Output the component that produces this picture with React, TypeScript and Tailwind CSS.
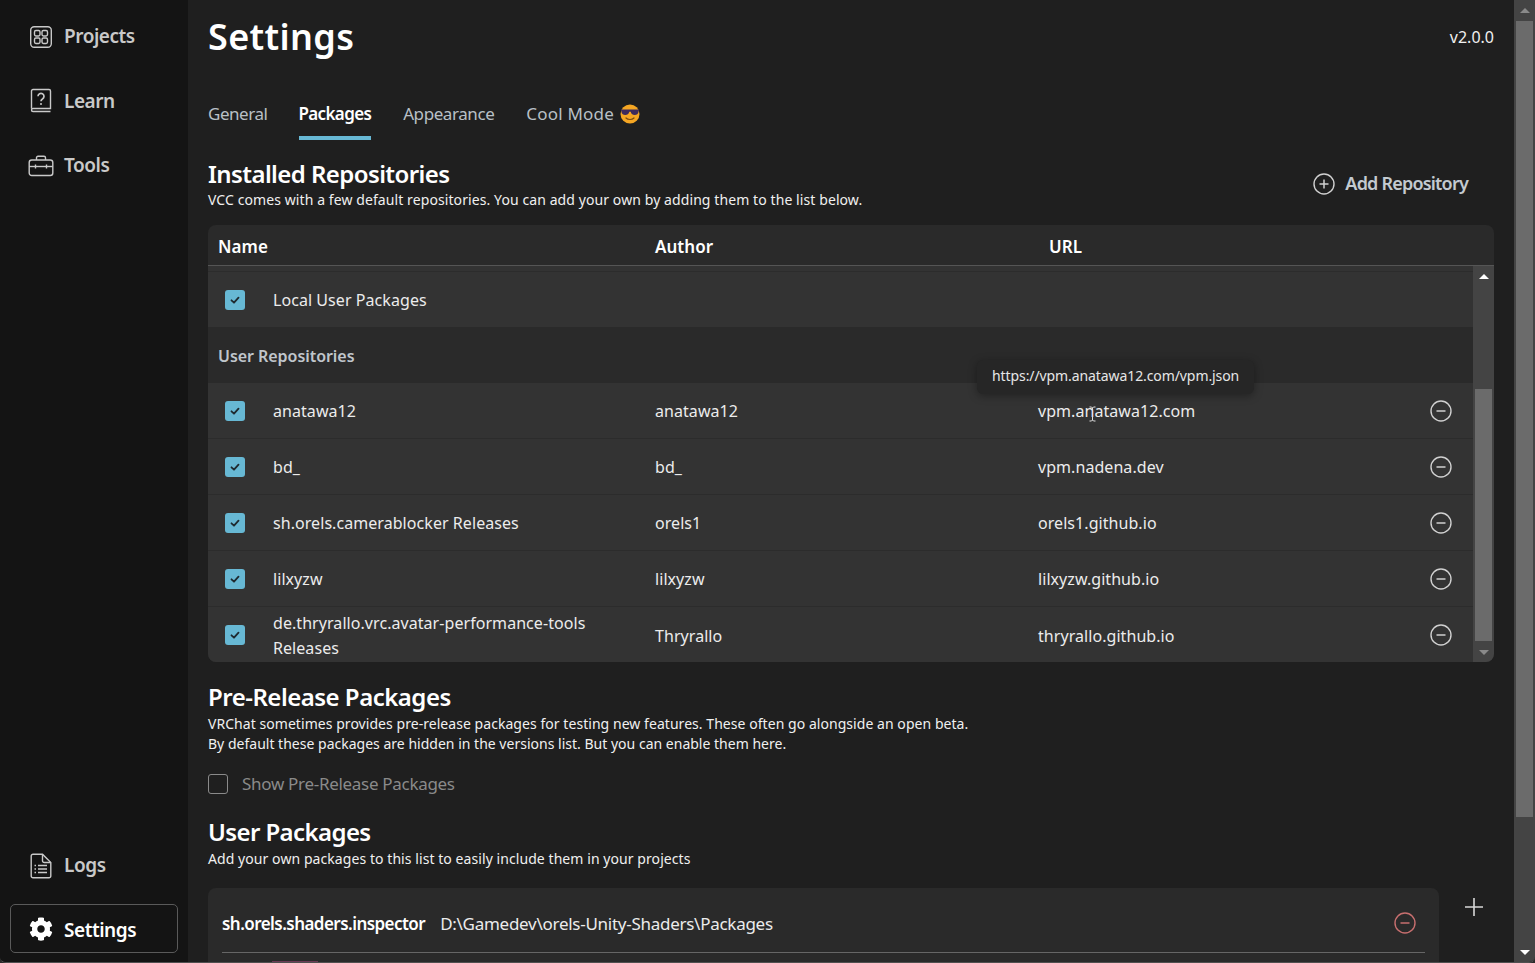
import type { ReactNode } from "react";
import { FaCog } from "react-icons/fa";

const repos = [
  { name: "anatawa12", author: "anatawa12", url: "vpm.anatawa12.com", tooltip: true },
  { name: "bd_", author: "bd_", url: "vpm.nadena.dev" },
  { name: "sh.orels.camerablocker Releases", author: "orels1", url: "orels1.github.io" },
  { name: "lilxyzw", author: "lilxyzw", url: "lilxyzw.github.io" },
  {
    name: "de.thryrallo.vrc.avatar-performance-tools Releases",
    author: "Thryrallo",
    url: "thryrallo.github.io",
  },
];

function ProjectsIcon() {
  return (
    <svg width="24" height="24" viewBox="0 0 24 24" fill="none" stroke="currentColor" strokeWidth="1.4">
      <rect x="1.7" y="1.7" width="20.6" height="20.6" rx="3.5" />
      <rect x="5.500" y="5.500" width="5.500" height="5.500" rx="1.4" />
      <rect x="13" y="5.500" width="5.500" height="5.500" rx="1.4" />
      <rect x="5.500" y="13" width="5.500" height="5.500" rx="1.4" />
      <rect x="13" y="13" width="5.500" height="5.500" rx="1.4" />
    </svg>
  );
}

function LearnIcon() {
  return (
    <svg width="24" height="26" viewBox="0 0 24 26" fill="none" stroke="currentColor" strokeWidth="1.4">
      <path d="M2.5 20.5V3a1.5 1.5 0 0 1 1.5-1.5h16A1.5 1.5 0 0 1 21.500 3v17.500H4a1.500 1.500 0 0 0-1.500 1.500v0A1.500 1.500 0 0 0 4 23.500h17.500" />
      <path d="M9 8.300a3 3 0 1 1 4.500 2.600c-1 .6-1.500 1.100-1.500 2.300" strokeWidth="1.700" />
      <circle cx="12" cy="16" r="1" fill="currentColor" stroke="none" />
    </svg>
  );
}

function ToolsIcon() {
  return (
    <svg width="26" height="22" viewBox="0 0 26 22" fill="none" stroke="currentColor" strokeWidth="1.4">
      <rect x="1.200" y="5" width="23.600" height="15.500" rx="2.500" />
      <path d="M8.500 5V2.800a1.500 1.500 0 0 1 1.500-1.500h6a1.500 1.500 0 0 1 1.500 1.500V5" />
      <path d="M1.200 11.500h23.600" />
      <path d="M7.500 9.500v4M18.500 9.500v4" />
    </svg>
  );
}

function LogsIcon() {
  return (
    <svg width="22" height="26" viewBox="0 0 22 26" fill="none" stroke="currentColor" strokeWidth="1.4">
      <path d="M3 1.200h9.500L20.800 9.500V23a1.800 1.800 0 0 1-1.800 1.800H3A1.800 1.800 0 0 1 1.200 23V3A1.800 1.800 0 0 1 3 1.200Z" />
      <path d="M12.500 1.200V7.700a1.800 1.800 0 0 0 1.800 1.800h6.500" />
      <path d="M8 12.500h9M8 16h9M8 19.500h9" />
      <path d="M4.500 12.500h1.500M4.500 16h1.500M4.500 19.500h1.500" />
    </svg>
  );
}

function CircleIcon({ plus, className }: { plus?: boolean; className: string }) {
  return (
    <svg className={className} width="22" height="22" viewBox="0 0 22 22" fill="none" stroke="currentColor" strokeWidth="1.400">
      <circle cx="11" cy="11" r="10" />
      <path d="M6.500 11h9" strokeWidth="1.500" />
      {plus ? <path d="M11 6.500v9" strokeWidth="1.500" /> : null}
    </svg>
  );
}

function CoolEmoji() {
  return (
    <svg width="20" height="20" viewBox="0 0 20 20">
      <circle cx="10" cy="10" r="9.500" fill="#f5a623" />
      <path d="M.8 5.500h18.400l-.5 1.500c-.3 3-2 4-4 4s-3.500-1.200-4-3.300h-1.400c-.5 2.100-2 3.300-4 3.300s-3.700-1-4-4Z" fill="#3d2a5c" />
      <path d="M6 14c2 2 6 2 8 0" fill="none" stroke="#7a4a10" strokeWidth="1.200" strokeLinecap="round" />
    </svg>
  );
}

function Checkbox() {
  return (
    <span className="flex h-5 w-5 items-center justify-center rounded-[3px] bg-[#67b8d4]">
      <svg width="12" height="12" viewBox="0 0 12 12" fill="none" stroke="#1f2a30" strokeWidth="1.800" strokeLinecap="round" strokeLinejoin="round">
        <path d="M2.500 6.300 5 8.700l4.500-5" />
      </svg>
    </span>
  );
}

function Scrollbar({
  top,
  thumb,
  bottom,
  upColor,
  downColor,
}: {
  top: string;
  thumb: string;
  bottom: string;
  upColor: string;
  downColor: string;
}) {
  return (
    <div className="flex w-[21px] shrink-0 flex-col bg-[#444444]">
      <div className={`flex items-start justify-center ${top}`}>
        <span className={`mt-[8px] h-0 w-0 border-x-[5px] border-b-[5px] border-x-transparent ${upColor}`} />
      </div>
      <div className={`mx-[2px] bg-[#6b6b6b] ${thumb}`} />
      <div className={`flex flex-col items-center justify-end ${bottom}`}>
        <span className={`mb-[7px] h-0 w-0 border-x-[5px] border-t-[5px] border-x-transparent ${downColor}`} />
      </div>
    </div>
  );
}

function NavItem({
  icon,
  label,
  active,
}: {
  icon: ReactNode;
  label: string;
  active?: boolean;
}) {
  return (
    <div
      className={`mx-[10px] flex h-[49px] items-center rounded-[5px] border text-[19px] font-semibold tracking-[-0.45px] ${
        active ? "border-[#5a5a5a] text-white" : "border-transparent text-[#c9c9c9]"
      }`}
    >
      <span className="flex w-[53px] shrink-0 justify-center pl-[7px]">{icon}</span>
      <span className={active ? "pt-[3px]" : ""}>{label}</span>
    </div>
  );
}

export default function App() {
  return (
    <div className="h-[963px] w-[1535px] bg-[#2b2b2b]">
      <div className="flex h-[963px] overflow-hidden rounded-b-md border-b border-[#505050] bg-[#1f1f1f] font-['Noto_Sans',sans-serif] text-white">
        <aside className="flex w-[188px] shrink-0 flex-col bg-[#141414] pb-[9px] pt-[12px]">
          <div className="flex flex-col gap-[15.5px]">
            <NavItem icon={<ProjectsIcon />} label="Projects" />
            <NavItem icon={<LearnIcon />} label="Learn" />
            <NavItem icon={<ToolsIcon />} label="Tools" />
          </div>
          <div className="mt-auto flex flex-col gap-[14px]">
            <NavItem icon={<LogsIcon />} label="Logs" />
            <NavItem icon={<FaCog size={24} />} label="Settings" active />
          </div>
        </aside>

        <main className="w-[1326px] shrink-0 overflow-hidden px-[20px]">
          <div className="flex h-[74px] items-center justify-between">
            <h1 className="text-[36px] font-semibold leading-none tracking-[0.35px]">Settings</h1>
            <span className="text-[16px] text-[#f0f0f0]">v2.0.0</span>
          </div>

          <nav className="mt-[14px] flex text-[17px] text-[#b9c0c6]">
            <span className="h-[52px] pt-[13px] tracking-[-0.45px]">General</span>
            <span className="ml-[31px] h-[52px] border-b-[4px] border-[#67b8d4] pt-[13px] font-semibold tracking-[-0.65px] text-white">Packages</span>
            <span className="ml-[32px] h-[52px] pt-[13px] tracking-[-0.42px]">Appearance</span>
            <span className="ml-[32px] flex h-[52px] items-start gap-[6px] pt-[13px] tracking-[0.2px]">
              Cool Mode
              <span className="mt-[3px]"><CoolEmoji /></span>
            </span>
          </nav>

          <div className="mt-[19px] flex items-start justify-between">
            <div>
              <h2 className="text-[24px] font-semibold leading-[30px] tracking-[-0.58px]">Installed Repositories</h2>
              <p className="mt-[1px] text-[14px] leading-[20px] tracking-[0.09px] text-[#f0f0f0]">
                VCC comes with a few default repositories. You can add your own by adding them to the list below.
              </p>
            </div>
            <button className="mr-[26px] mt-[11px] flex items-center gap-[10px] text-[18px] font-semibold tracking-[-0.8px] text-[#c3cad0]">
              <CircleIcon plus className="text-[#d0d0d0]" />
              Add Repository
            </button>
          </div>

          <section className="mt-[15px] overflow-hidden rounded-lg bg-[#2a2a2a]">
            <div className="grid h-[41px] grid-cols-[437px_394px_1fr] items-center border-b border-[#555555] pl-[10px] pt-[3px] text-[17px] font-semibold tracking-[0.05px]">
              <span>Name</span>
              <span>Author</span>
              <span>URL</span>
            </div>
            <div className="flex h-[396px]">
              <div className="min-w-0 flex-1 text-[16px] tracking-[0.06px] text-[#ececec]">
                <div className="h-[6px] border-b border-[#2c2c2c] bg-[#333333]" />
                <div className="flex h-[55px] items-center bg-[#333333] pl-[17px]">
                  <Checkbox />
                  <span className="ml-[28px]">Local User Packages</span>
                </div>
                <div className="flex h-[56px] items-center pl-[10px] pt-[2px] font-semibold tracking-[-0.05px] text-[#c0c6cc]">User Repositories</div>
                {repos.map((repo) => (
                  <div
                    key={repo.name}
                    className="relative grid h-[56px] grid-cols-[65px_382px_383px_1fr] items-center border-b border-[#2c2c2c] bg-[#333333] last:border-b-0"
                  >
                    <span className="pl-[17px]"><Checkbox /></span>
                    <span className="max-w-[330px] pt-[2px] leading-[25px]">{repo.name}</span>
                    <span className="pt-[1px]">{repo.author}</span>
                    <span className="pt-[1px]">{repo.url}</span>
                    <CircleIcon className="absolute left-[1222px] top-[17px] text-[#d0d0d0]" />
                    {repo.tooltip ? (
                      <>
                        <div className="absolute left-[769px] top-[-23px] rounded-md bg-[#262626] px-[15px] pb-[7px] pt-[5px] text-[14px] leading-[22px] tracking-[-0.09px] text-[#e6e6e6] shadow-[0_2px_8px_rgba(0,0,0,0.35)]">
                          https://vpm.anatawa12.com/vpm.json
                        </div>
                        <svg className="absolute left-[880px] top-[23px]" width="9" height="16" viewBox="0 0 9 16" fill="none" stroke="#e0e0e0" strokeWidth="1">
                          <path d="M1.500 1h2l1 1 1-1h2M4.500 2v12M1.500 15h2l1-1 1 1h2" />
                        </svg>
                      </>
                    ) : null}
                  </div>
                ))}
              </div>
              <Scrollbar
                top="h-[123px]"
                thumb="h-[252px]"
                bottom="h-[21px]"
                upColor="border-b-white"
                downColor="border-t-[#8a8a8a]"
              />
            </div>
          </section>

          <h2 className="mt-[20px] text-[24px] font-semibold leading-[30px] tracking-[-0.5px]">Pre-Release Packages</h2>
          <p className="mt-[2px] text-[14px] leading-[20px] tracking-[0.05px] text-[#f0f0f0]">
            VRChat sometimes provides pre-release packages for testing new features. These often go alongside an open beta.
            <br />
            <span className="tracking-[0.01px]">By default these packages are hidden in the versions list. But you can enable them here.</span>
          </p>
          <label className="mt-[20px] flex h-[20px] items-center gap-[14px] text-[17px] tracking-[-0.3px] text-[#8a8a8a]">
            <span className="h-5 w-5 rounded-[3px] border border-[#8a8a8a]" />
            Show Pre-Release Packages
          </label>

          <h2 className="mt-[23px] text-[24px] font-semibold leading-[30px] tracking-[-0.6px]">User Packages</h2>
          <p className="mt-[2px] text-[14px] leading-[20px] tracking-[0.07px] text-[#f0f0f0]">
            Add your own packages to this list to easily include them in your projects
          </p>

          <div className="mt-[19px] flex items-start">
            <div className="w-[1231px] shrink-0 rounded-t-lg bg-[#2a2a2a] px-[14px] pt-[22px]">
              <div className="flex h-[43px] items-start justify-between border-b border-[#666666] pr-[9px] text-[17px]">
                <div className="flex gap-[15px] pt-[1px]">
                  <span className="font-semibold tracking-[-0.55px]">sh.orels.shaders.inspector</span>
                  <span className="tracking-[-0.27px] text-[#ececec]">D:\Gamedev\orels-Unity-Shaders\Packages</span>
                </div>
                <CircleIcon className="mt-[2px] text-[#c76f6f]" />
              </div>
              <div className="ml-[50px] mt-[8px] h-[4px] w-[46px] bg-[#6b3a55]" />
            </div>
            <svg className="ml-[25px] mt-[9px]" width="20" height="20" viewBox="0 0 20 20" fill="none" stroke="#d8d8d8" strokeWidth="1.600">
              <path d="M10 1v18M1 10h18" />
            </svg>
          </div>
        </main>

        <Scrollbar
          top="h-[21px]"
          thumb="h-[797px]"
          bottom="h-[145px]"
          upColor="border-b-[#8a8a8a]"
          downColor="border-t-white"
        />
      </div>
    </div>
  );
}
